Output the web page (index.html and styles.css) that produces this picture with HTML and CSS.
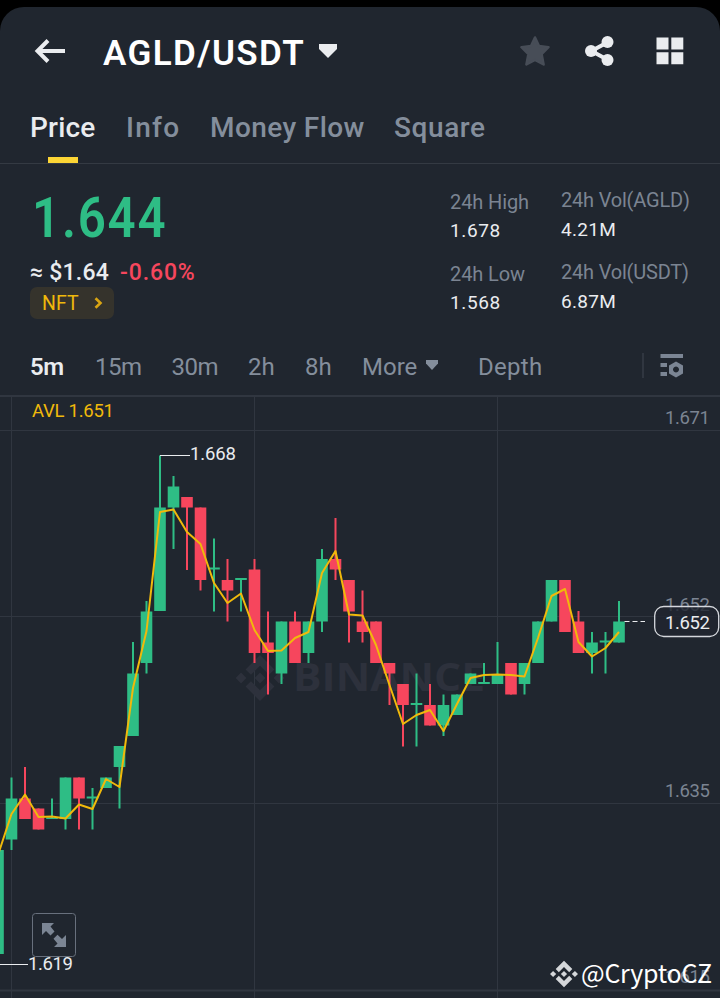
FILE: index.html
```html
<!DOCTYPE html>
<html lang="en">
<head>
    <meta charset="UTF-8">
    <meta name="viewport" content="width=device-width, initial-scale=1.0">
    <title>AGLD/USDT</title>
    <link rel="stylesheet" href="styles.css">
</head>
<body>
    <div class="screen">
        <header class="header">
            <svg class="back" width="32" height="26" viewBox="0 0 32 26">
                <path d="M31 13H4M14 2.500L3.500 13L14 23.500" fill="none" stroke="#eaecef" stroke-width="4"/>
            </svg>
            <h1 class="pair">AGLD/USDT</h1>
            <svg class="caret" width="18" height="14" viewBox="0 0 18 14">
                <path d="M0 0h18v5L9 14L0 5z" fill="#eaecef"/>
            </svg>
            <div class="actions">
                <svg width="30" height="30" viewBox="0 0 30 30">
                    <path d="M15 1.500L19 10L28.500 11.200L21.600 18L23.600 28.500L15 24L6.400 28.500L8.400 18L1.500 11.200L11 10z" fill="#474d57" stroke="#474d57" stroke-width="2.500" stroke-linejoin="round"/>
                </svg>
                <svg width="30" height="30" viewBox="0 0 30 30">
                    <path d="M23 6L6.500 15L23 24" fill="none" stroke="#eaecef" stroke-width="4"/>
                    <g fill="#eaecef">
                        <circle cx="22.500" cy="6" r="6"/>
                        <circle cx="6" cy="15" r="6"/>
                        <circle cx="22.500" cy="24" r="6"/>
                    </g>
                </svg>
                <svg width="28" height="28" viewBox="0 0 28 28">
                    <path d="M.5 .5h12v12h-12zM15.300 .5h12v12h-12zM.5 15.300h12v12h-12zM15.300 15.300h12v12h-12z" fill="#eaecef"/>
                </svg>
            </div>
        </header>

        <nav class="tabs">
            <a class="tab active">Price</a>
            <a class="tab info">Info</a>
            <a class="tab flow">Money Flow</a>
            <a class="tab square">Square</a>
        </nav>

        <section class="summary">
            <div class="quote">
                <div class="last-price">1.644</div>
                <div class="change-row">
                    <span class="fiat">≈ $1.64</span>
                    <span class="change">-0.60%</span>
                </div>
                <div class="tag">
                    NFT
                    <svg width="9" height="12" viewBox="0 0 9 12">
                        <path d="M1.500 1.200L6.500 6L1.500 10.800" fill="none" stroke="#d9a513" stroke-width="2.600"/>
                    </svg>
                </div>
            </div>
            <dl class="stats">
                <dt>24h High</dt>
                <dd>1.678</dd>
                <dt>24h Low</dt>
                <dd>1.568</dd>
            </dl>
            <dl class="stats volume">
                <dt>24h Vol(AGLD)</dt>
                <dd>4.21M</dd>
                <dt>24h Vol(USDT)</dt>
                <dd>6.87M</dd>
            </dl>
        </section>

        <nav class="intervals">
            <a class="selected">5m</a>
            <a class="m15">15m</a>
            <a class="m30">30m</a>
            <a class="h2">2h</a>
            <a class="h8">8h</a>
            <a class="more">More</a>
            <svg class="more-caret" width="12" height="10" viewBox="0 0 12 10">
                <path d="M0 0h12v3.500L6 10L0 3.500z" fill="#848e9c"/>
            </svg>
            <a class="depth">Depth</a>
            <div class="settings">
                <svg width="24" height="25" viewBox="0 0 24 25">
                    <path d="M.5 1h22.500v4H.5zM.5 10h6.500v4H.5zM.5 19h6.500v4H.5z" fill="#7b8594"/>
                    <path fill-rule="evenodd" d="M16 8.500L23 12.500V20.500L16 24.500L9 20.500V12.500zM16 13.500a3 3 0 1 0 .01 0z" fill="#7b8594"/>
                </svg>
            </div>
        </nav>

        <svg class="chart" width="720" height="603" viewBox="0 395 720 603">
            <g class="grid">
                <path d="M0 396H720M0 990.500H720" stroke-width="2"/>
                <path d="M0 430.500H720M0 616.500H720M0 803.500H720M11.500 397V998M254.500 397V998M497.500 397V998"/>
            </g>
            <g class="watermark">
                <g transform="translate(260 678) scale(1.740)">
                    <path d="M-8.300 -4.900L0 -13.200L8.300 -4.900L5.200 -1.800L0 -7L-5.200 -1.800zM-8.300 4.900L0 13.200L8.300 4.900L5.200 1.800L0 7L-5.200 1.800zM-14 0l3.100 -3.100L-7.800 0l-3.100 3.100zM7.800 0l3.100 -3.100L14 0l-3.100 3.100zM-3.100 0L0 -3.100L3.100 0L0 3.100z"/>
                </g>
                <text x="293" y="691" textLength="192" lengthAdjust="spacingAndGlyphs">BINANCE</text>
            </g>
            <g id="candles"></g>
            <polyline id="avl" class="avl"/>
            <path class="leader" d="M160 455.500H190M0 964.500H28"/>
            <path class="last-line" d="M624.500 621.500H645"/>
            <text class="avl-label" x="32" y="417" textLength="82">AVL 1.651</text>
            <text class="mark" x="190" y="460" textLength="46">1.668</text>
            <g class="axis">
                <text x="665" y="424" textLength="45">1.671</text>
                <text x="665" y="611" textLength="45">1.652</text>
                <text x="665" y="797" textLength="45">1.635</text>
                <text x="665" y="983" textLength="45">1.615</text>
            </g>
            <rect class="price-box" x="654.700" y="606.500" width="64" height="30" rx="9"/>
            <text class="box-label" x="665" y="629" textLength="45">1.652</text>
            <g class="expand">
                <rect x="32.500" y="913.500" width="43" height="43" rx="3"/>
                <path d="M42 923H54L50.500 926.500L54.500 931.500L50.500 935.500L46 931L42 935zM66 947H54L57.500 943.500L53.500 938.800L57.500 934.800L62 939L66 935z"/>
            </g>
            <text class="mark" x="28" y="970" textLength="45">1.619</text>
            <g class="credit">
                <path transform="translate(564 974)" d="M-8.300 -4.900L0 -13.200L8.300 -4.900L5.200 -1.800L0 -7L-5.200 -1.800zM-8.300 4.900L0 13.200L8.300 4.900L5.200 1.800L0 7L-5.200 1.800zM-14 0l3.100 -3.100L-7.800 0l-3.100 3.100zM7.800 0l3.100 -3.100L14 0l-3.100 3.100zM-3.100 0L0 -3.100L3.100 0L0 3.100z"/>
                <text x="581" y="983" textLength="131">@CryptoCZ</text>
            </g>
        </svg>
    </div>
    <script src="chart.js"></script>
</body>
</html>
```
FILE: styles.css
```css
* {
    box-sizing: border-box;
}

body {
    margin: 0;
    background: #000;
    color: #eaecef;
    font-family: Roboto, "Liberation Sans", sans-serif;
}

svg {
    display: block;
    flex: none;
}

.screen {
    width: 720px;
    height: 991px;
    margin-top: 7px;
    background: #20262f;
    border-radius: 24px 24px 0 0;
    overflow: hidden;
}

/* Top bar */
.header {
    display: flex;
    align-items: center;
    height: 88px;
    padding: 0 36px 0 34px;
}

.pair {
    width: 201px;
    margin: 5px 0 0 37px;
    color: #fff;
    font-size: 35px;
    font-weight: 600;
    letter-spacing: 1.4px;
    white-space: nowrap;
}

.caret {
    margin: 0 0 0 15px;
}

.actions {
    display: flex;
    align-items: center;
    margin-left: auto;
    gap: 35px;
}

.actions svg:last-child {
    margin-left: 6px;
}

/* Page tabs */
.tabs {
    display: flex;
    height: 69px;
    padding: 16px 30px 0;
    border-bottom: 1px solid #343a43;
    font-size: 28px;
    font-weight: 500;
    line-height: 34px;
    color: #848e9c;
}

.tab {
    flex: none;
    white-space: nowrap;
}

.active {
    position: relative;
    width: 96px;
    color: #eaecef;
    letter-spacing: 0.2px;
}

.active::after {
    content: "";
    position: absolute;
    left: 18px;
    bottom: 0;
    width: 30px;
    height: 6px;
    background: #fcd535;
}

.info {
    width: 84px;
    letter-spacing: 1.3px;
}

.flow {
    width: 184px;
    letter-spacing: 0.4px;
}

.square {
    letter-spacing: 0.6px;
}

/* Price and 24h stats */
.summary {
    display: flex;
    height: 174px;
    padding: 0 0 0 30px;
}

.quote {
    width: 420px;
}

.last-price {
    margin: 22px 0 0 2px;
    font-size: 56px;
    font-weight: 600;
    line-height: 64px;
    letter-spacing: 2px;
    color: #2ebd85;
    transform: scaleX(0.88);
    transform-origin: left;
}

.change-row {
    display: flex;
    gap: 11px;
    margin-top: 9px;
    font-size: 23px;
    font-weight: 500;
    line-height: 28px;
    letter-spacing: 0.2px;
}

.change {
    color: #f6465d;
    letter-spacing: 0.9px;
}

.tag {
    display: flex;
    align-items: center;
    justify-content: space-between;
    width: 84px;
    height: 32px;
    padding: 0 11px 0 12px;
    border-radius: 7px;
    background: #35332c;
    color: #f0b90b;
    font-size: 19.5px;
}

.stats {
    width: 111px;
    margin: 25px 0 0;
    white-space: nowrap;
}

.stats dt {
    height: 29px;
    font-size: 20px;
    line-height: 26px;
    letter-spacing: -0.1px;
    color: #7b8492;
}

.stats dd {
    height: 43px;
    margin: 0;
    font-size: 19px;
    font-weight: 450;
    line-height: 26px;
    letter-spacing: 0.6px;
}

.volume {
    margin-top: 23px;
}

.volume dt {
    height: 30px;
    letter-spacing: -0.2px;
}

.volume dd {
    height: 42px;
    letter-spacing: 0.3px;
}

/* Chart intervals */
.intervals {
    display: flex;
    align-items: center;
    height: 57px;
    padding: 0 35px 0 30px;
    font-size: 24px;
    color: #848e9c;
}

.intervals a {
    flex: none;
}

.intervals .selected {
    width: 65px;
    color: #eaecef;
    font-weight: 600;
    letter-spacing: -0.4px;
}

.m15,
.m30 {
    width: 76.500px;
    letter-spacing: -0.5px;
}

.h2,
.h8 {
    width: 57px;
}

.more {
    width: 64px;
}

.more-caret {
    margin: 0 40px 3px 0;
}

.depth {
    letter-spacing: 0.3px;
}

.settings {
    margin: -2px 1px 0 auto;
    padding-left: 16px;
    border-left: 2px solid #303640;
}

/* Candlestick chart */
.grid {
    fill: none;
    stroke: #303640;
}

.watermark {
    fill: #2d313c;
    font-family: "Open Sans", sans-serif;
    font-weight: 700;
}

.up {
    fill: #2ebd85;
}

.down {
    fill: #f6465d;
}

.avl {
    fill: none;
    stroke: #f0b90b;
    stroke-width: 2;
    stroke-linejoin: round;
}

.leader {
    fill: none;
    stroke: #eaecef;
    stroke-width: 1.2;
}

.last-line {
    stroke: #eaecef;
    stroke-dasharray: 5 3;
}

.chart text {
    font-size: 18.5px;
}

.avl-label {
    fill: #f0b90b;
}

.mark,
.box-label {
    fill: #eaecef;
}

.axis {
    fill: #7b8492;
}

.price-box {
    fill: #20262f;
    fill-opacity: 0.8;
    stroke: #d5d8dd;
    stroke-width: 1.3;
}

.expand rect {
    fill: none;
    stroke: #68707d;
}

.expand path {
    fill: #7b8594;
}

.chart .watermark text {
    font-size: 39px;
}

.credit path {
    fill: #d5d7da;
}

.chart .credit text {
    fill: #fff;
    font-family: "Noto Sans CJK SC", "Noto Sans", sans-serif;
    font-size: 25px;
}
```
FILE: chart.js
```js
// x center, body top, body bottom, wick top, wick bottom, direction, average
const candles = [
    [-2, 850, 954, 850, 964, 'up', 855],
    [11.5, 798.5, 839.5, 777.5, 850, 'up', 814],
    [25, 798.5, 819, 767, 819, 'down', 794.5],
    [38.5, 808.5, 829.5, 808.5, 829.5, 'down', 817],
    [52, 817.5, 819, 798.5, 819, 'up', 816.5],
    [65.5, 777.5, 819, 777.5, 829.5, 'up', 818.5],
    [79, 777.5, 798.5, 777.5, 829.5, 'down', 804.5],
    [92.5, 796.5, 798.5, 788, 829.5, 'up', 809],
    [106, 777.5, 788, 777.5, 788, 'up', 779],
    [119.5, 746, 767, 746, 808.5, 'up', 787],
    [133, 673.5, 736, 642, 736, 'up', 688],
    [146.5, 611.5, 663, 601, 673.5, 'up', 631],
    [160, 507.5, 611, 455.5, 611, 'up', 512],
    [173.5, 486.5, 507.5, 476, 549, 'up', 509.5],
    [187, 497, 507.5, 497, 570, 'down', 532],
    [200.5, 507.5, 580, 507.5, 590.5, 'down', 544],
    [214, 567.5, 569.5, 538.5, 611.5, 'up', 583],
    [227.5, 580, 590.5, 559, 621.5, 'down', 603],
    [241, 578, 580, 578, 611.5, 'up', 593.5],
    [254.5, 569.5, 653, 559, 663, 'down', 630],
    [268, 642.5, 653, 611.5, 694.5, 'down', 651],
    [281.5, 621.5, 673.5, 621.5, 684, 'up', 650.5],
    [295, 621.5, 663, 611.5, 663, 'down', 638],
    [308.5, 621.5, 653, 621.5, 663, 'up', 632],
    [322, 559, 621.5, 549, 632, 'up', 573],
    [335.5, 559, 569.5, 518, 580, 'down', 551],
    [349, 580, 611.5, 580, 642.5, 'down', 614.5],
    [362.5, 621.5, 632, 590.5, 642.5, 'down', 615.5],
    [376, 621.5, 663, 621.5, 663, 'down', 645],
    [389.5, 663, 673.5, 663, 705, 'down', 685],
    [403, 684, 705, 684, 746.5, 'down', 724],
    [416.5, 703, 705, 673.5, 746.5, 'up', 715],
    [430, 705, 725.5, 684, 725.5, 'down', 710],
    [443.5, 705, 725.5, 694.5, 736, 'up', 731],
    [457, 694.5, 715, 694.5, 715, 'up', 704],
    [470.5, 673.5, 684, 673.5, 684, 'up', 678],
    [484, 682, 684, 663, 684, 'up', 675],
    [497.5, 674.5, 684, 642, 684, 'up', 674.5],
    [511, 663, 694.5, 663, 694.5, 'down', 675],
    [524.5, 663, 684, 663, 694.5, 'up', 676.5],
    [538, 621.5, 663, 621.5, 663, 'up', 638],
    [551.5, 580, 621.5, 580, 621.5, 'up', 596],
    [565, 580, 632, 580, 632, 'down', 589],
    [578.5, 621.5, 653, 611, 653, 'down', 642],
    [592, 642.5, 653, 632, 673.5, 'up', 656.5],
    [605.5, 640.5, 642.5, 632, 673.5, 'up', 648],
    [619, 621.5, 642.5, 601, 642.5, 'up', 632]
];

const layer = document.getElementById('candles');

function addRect(x, y, width, height, dir) {
    const rect = document.createElementNS('http://www.w3.org/2000/svg', 'rect');
    rect.setAttribute('x', x);
    rect.setAttribute('y', y);
    rect.setAttribute('width', width);
    rect.setAttribute('height', height);
    rect.setAttribute('class', dir);
    layer.appendChild(rect);
}

candles.forEach(([x, top, bottom, high, low, dir]) => {
    addRect(x - 1, high, 2, low - high, dir);
    addRect(x - 5.8, top, 11.6, bottom - top, dir);
});

document.getElementById('avl').setAttribute('points', candles.map((c) => c[0] + ',' + c[6]).join(' '));
```
